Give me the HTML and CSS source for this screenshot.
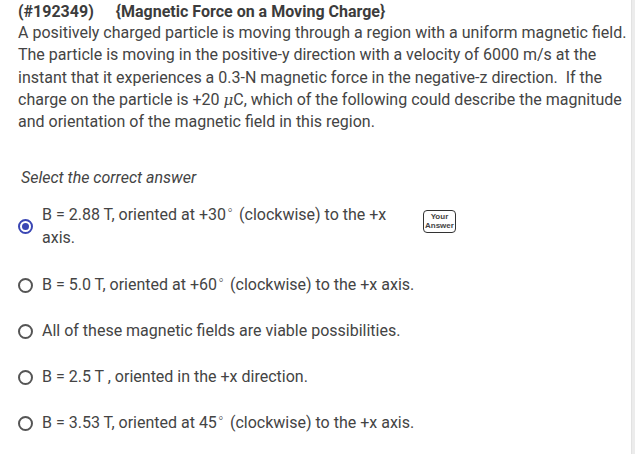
FILE: index.html
```html
<!DOCTYPE html>
<html>
<head>
<meta charset="utf-8">
<link rel="stylesheet" href="styles.css">
</head>
<body>
<div class="page">
  <div class="question">
    <div class="title">(#192349)<span class="gap"></span>{Magnetic Force on a Moving Charge}</div>
    <div class="text">A positively charged particle is moving through a region with a uniform magnetic field. The particle is moving in the positive-y direction with a velocity of 6000 m/s at the instant that it experiences a 0.3-N magnetic force in the negative-z direction.&nbsp; If the charge on the particle is +20 <i class="mu">&mu;</i>C, which of the following could describe the magnitude and orientation of the magnetic field in this region.</div>
  </div>
  <div class="prompt">Select the correct answer</div>
  <div class="options">
    <div class="option first">
      <span class="radio selected"></span>
      <span class="label wrap">B = 2.88 T, oriented at +30<span class="deg">&#8728;</span> (clockwise) to the +x axis.</span>
      <span class="badge">Your<br>Answer</span>
    </div>
    <div class="option">
      <span class="radio"></span>
      <span class="label">B = 5.0 T, oriented at +60<span class="deg">&#8728;</span> (clockwise) to the +x axis.</span>
    </div>
    <div class="option">
      <span class="radio"></span>
      <span class="label">All of these magnetic fields are viable possibilities.</span>
    </div>
    <div class="option">
      <span class="radio"></span>
      <span class="label">B = 2.5 T , oriented in the +x direction.</span>
    </div>
    <div class="option">
      <span class="radio"></span>
      <span class="label">B = 3.53 T, oriented at 45<span class="deg">&#8728;</span> (clockwise) to the +x axis.</span>
    </div>
  </div>
</div>
<div class="scrollbar"></div>
</body>
</html>
```
FILE: styles.css
```css
html, body {
  margin: 0;
  padding: 0;
  background: #ffffff;
}
body {
  font-family: Roboto, "Liberation Sans", sans-serif;
  color: #444444;
  font-size: 16px;
  display: flex;
  height: 454px;
  overflow: hidden;
}
.page {
  flex: 1;
  padding: 1px 0 0 18px;
}
.title {
  font-weight: bold;
  line-height: 21px;
  color: #3c3c3c;
}
.gap {
  display: inline-block;
  width: 22px;
}
.text {
  line-height: 22.3px;
  width: 612px;
}
.mu {
  font-family: "DejaVu Serif", serif;
  font-size: 15px;
}
.prompt {
  font-style: italic;
  margin-top: 34px;
  margin-left: 3px;
  line-height: 22px;
}
.options {
  display: flex;
  flex-direction: column;
  margin-top: 14px;
}
.option {
  display: flex;
  align-items: center;
  height: 46px;
}
.option.first {
  height: 46px;
  margin-bottom: 13px;
}
.radio {
  width: 11px;
  height: 11px;
  border: 2px solid #555555;
  border-radius: 50%;
  margin-right: 9px;
  flex-shrink: 0;
  box-sizing: content-box;
}
.radio.selected {
  border-color: #3a46b4;
  position: relative;
}
.radio.selected::after {
  content: "";
  position: absolute;
  left: 2px;
  top: 2px;
  width: 7px;
  height: 7px;
  border-radius: 50%;
  background: #3a46b4;
}
.label {
  line-height: 22.5px;
}
.label.wrap {
  width: 365px;
  line-height: 23px;
}
.deg {
  font-family: "DejaVu Sans", sans-serif;
  font-weight: 200;
  font-size: 13px;
  position: relative;
  top: -6px;
  line-height: 0;
  margin: 0 1px 0 0;
}
.badge {
  align-self: flex-start;
  margin-top: 7px;
  margin-left: 16px;
  border: 1px solid #333333;
  border-radius: 4px;
  font-family: "Liberation Sans", Arial, sans-serif;
  font-weight: bold;
  font-size: 8px;
  line-height: 9px;
  color: #444444;
  text-align: center;
  padding: 1px 1px 2px 1px;
}
.scrollbar {
  width: 3px;
  background: #ececec;
  border-left: 1px solid #e2e2e2;
}
```
